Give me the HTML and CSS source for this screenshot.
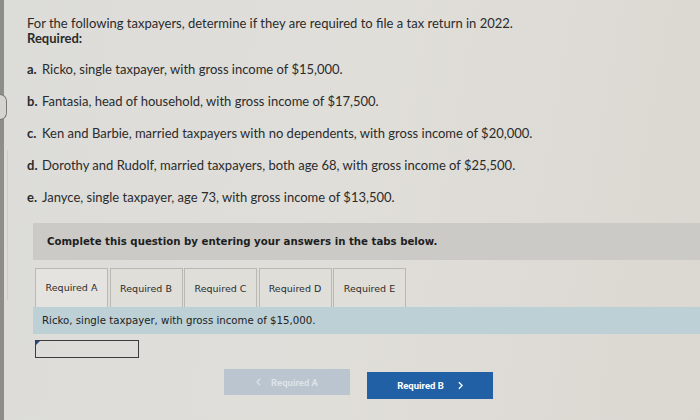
FILE: index.html
```html
<!DOCTYPE html>
<html>
<head>
<meta charset="utf-8">
<link rel="stylesheet" href="styles.css">
</head>
<body>
<div class="screen">
  <div class="edge"><span class="knob"></span><span class="ghost"></span></div>
  <main class="content">
    <p class="intro">For the following taxpayers, determine if they are required to file a tax return in 2022.</p>
    <p class="req">Required:</p>
    <ol class="items">
      <li><b>a.</b><span>Ricko, single taxpayer, with gross income of $15,000.</span></li>
      <li><b>b.</b><span>Fantasia, head of household, with gross income of $17,500.</span></li>
      <li><b>c.</b><span>Ken and Barbie, married taxpayers with no dependents, with gross income of $20,000.</span></li>
      <li><b>d.</b><span>Dorothy and Rudolf, married taxpayers, both age 68, with gross income of $25,500.</span></li>
      <li><b>e.</b><span>Janyce, single taxpayer, age 73, with gross income of $13,500.</span></li>
    </ol>
    <div class="panel">
      <div class="notice">Complete this question by entering your answers in the tabs below.</div>
      <div class="tabs">
        <div class="tab active">Required A</div>
        <div class="tab">Required B</div>
        <div class="tab">Required C</div>
        <div class="tab">Required D</div>
        <div class="tab">Required E</div>
      </div>
      <div class="prompt">Ricko, single taxpayer, with gross income of $15,000.</div>
      <div class="answer"><span class="caret"></span></div>
      <div class="nav">
        <button class="btn prev"><svg class="chev" viewBox="0 0 6 10" width="5" height="8"><path d="M5 1 L1 5 L5 9" fill="none" stroke="currentColor" stroke-width="1.4"/></svg><span>Required A</span></button>
        <button class="btn next"><span>Required B</span><svg class="chev" viewBox="0 0 6 10" width="5" height="9"><path d="M1 1 L5 5 L1 9" fill="none" stroke="currentColor" stroke-width="1.6"/></svg></button>
      </div>
    </div>
  </main>
</div>
</body>
</html>
```
FILE: styles.css
```css
html, body {
  margin: 0;
  padding: 0;
}
body {
  width: 700px;
  height: 420px;
  overflow: hidden;
  background: #dedcd7;
}
.screen {
  display: flex;
  height: 420px;
  background: linear-gradient(100deg, #dcdcd9 0%, #e0ded9 50%, #dbd8d2 100%);
}
.edge {
  width: 4px;
  flex: none;
  background: #8e8d89;
  position: relative;
}
.knob {
  position: absolute;
  left: 0;
  top: 94px;
  width: 6px;
  height: 24px;
  border: 1px solid #7a7975;
  border-left: none;
  border-radius: 0 12px 12px 0;
  background: #d6d4cf;
}
.ghost {
  position: absolute;
  left: 7px;
  top: 150px;
  width: 1px;
  height: 150px;
  background: #cfcdc8;
}
.content {
  flex: 1;
  padding: 16px 0 0 23px;
  font-family: "Lato", "Open Sans", sans-serif;
  color: #2b2b2b;
}
.intro {
  margin: 0;
  font-size: 13px;
  line-height: 15px;
}
.req {
  margin: 0;
  font-size: 13px;
  line-height: 15px;
  font-weight: bold;
}
.items {
  list-style: none;
  margin: 0;
  padding: 15px 0 0 0;
  display: flex;
  flex-direction: column;
  gap: 15px;
  font-size: 13px;
  line-height: 17px;
}
.items li {
  display: flex;
  gap: 5px;
}
.items b {
  width: 10px;
}
.panel {
  margin: 17px 0 0 6px;
  font-family: "DejaVu Sans", Verdana, sans-serif;
}
.notice {
  background: #cbcac6;
  height: 37px;
  padding-left: 14px;
  display: flex;
  align-items: center;
  font-weight: bold;
  font-size: 10.2px;
  color: #1e1e1e;
}
.tabs {
  display: flex;
  margin: 8px 0 0 2px;
  gap: 1.5px;
  height: 39px;
}
.tab {
  width: 73px;
  border: 1px solid #b9b8b3;
  border-bottom: none;
  background: #dfded9;
  font-size: 9.5px;
  color: #2c2c2c;
  display: flex;
  align-items: center;
  justify-content: center;
  box-sizing: border-box;
}
.tab.active {
  background: #e5e3df;
  padding-bottom: 2px;
}
.prompt {
  background: #bcd0d6;
  height: 27px;
  display: flex;
  align-items: center;
  padding-left: 9px;
  font-size: 10.2px;
  color: #222;
}
.answer {
  width: 102px;
  height: 16px;
  border: 1.5px solid #3c3c3c;
  margin: 6px 0 0 2px;
  position: relative;
}
.caret {
  position: absolute;
  left: 0;
  top: 0;
  border-top: 4px solid #2c4a80;
  border-right: 4px solid transparent;
}
.nav {
  display: flex;
  gap: 17px;
  margin: 11px 0 0 191px;
  align-items: flex-start;
}
.btn {
  width: 126px;
  height: 26px;
  border: none;
  font-family: "Roboto", "DejaVu Sans", sans-serif;
  font-weight: bold;
  font-size: 9.5px;
  padding: 0;
  display: flex;
  align-items: center;
  justify-content: center;
  gap: 10px;
}
.prev {
  background: #bac5cf;
  color: #dde3e8;
}
.next {
  margin-top: 3px;
  height: 27px;
  background: #2260a6;
  color: #ffffff;
  gap: 14px;
}
.chev {
  display: block;
}
```
